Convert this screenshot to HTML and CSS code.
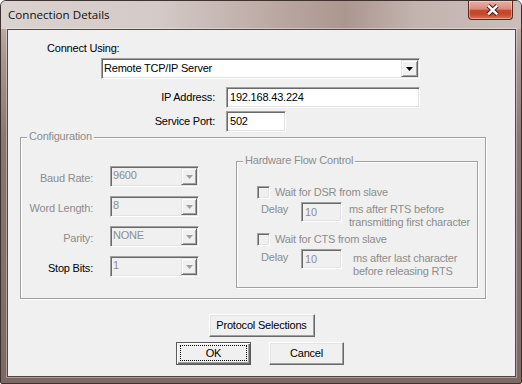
FILE: index.html
```html
<!DOCTYPE html>
<html>
<head>
<meta charset="utf-8">
<link rel="stylesheet" href="styles.css">
</head>
<body>
<div class="window">
  <div class="titlebar">
    <span class="title">Connection Details</span>
    <div class="close">
      <svg width="45" height="18" viewBox="0 0 45 18">
        <path d="M20 4.5 L29.5 13.5 M29.5 4.5 L20 13.5" stroke="#3b1f1b" stroke-width="4.6" fill="none"/>
        <path d="M20 4.5 L29.5 13.5 M29.5 4.5 L20 13.5" stroke="#ffffff" stroke-width="2.6" fill="none"/>
      </svg>
    </div>
  </div>
  <div class="frame">
    <div class="client">
      <div class="connect-label">Connect Using:</div>
      <div class="combo combo-main">
        <span class="combo-text">Remote TCP/IP Server</span>
        <span class="drop"><svg width="7" height="4" viewBox="0 0 7 4"><polygon points="0,0 7,0 3.5,4" fill="#000"/></svg></span>
      </div>
      <div class="field-row ip-row">
        <span class="flabel">IP Address:</span>
        <div class="edit ip">192.168.43.224</div>
      </div>
      <div class="field-row port-row">
        <span class="flabel">Service Port:</span>
        <div class="edit port">502</div>
      </div>

      <div class="group config">
        <span class="glabel">Configuration</span>
        <div class="config-cols">
          <div class="serial">
            <div class="srow">
              <span class="slabel dis">Baud Rate:</span>
              <div class="combo combo-dis"><span class="combo-text">9600</span><span class="drop drop-dis"><svg width="7" height="4" viewBox="0 0 7 4"><polygon points="0,0 7,0 3.5,4" fill="#a0a0a0"/></svg></span></div>
            </div>
            <div class="srow">
              <span class="slabel dis">Word Length:</span>
              <div class="combo combo-dis"><span class="combo-text">8</span><span class="drop drop-dis"><svg width="7" height="4" viewBox="0 0 7 4"><polygon points="0,0 7,0 3.5,4" fill="#a0a0a0"/></svg></span></div>
            </div>
            <div class="srow">
              <span class="slabel dis">Parity:</span>
              <div class="combo combo-dis"><span class="combo-text">NONE</span><span class="drop drop-dis"><svg width="7" height="4" viewBox="0 0 7 4"><polygon points="0,0 7,0 3.5,4" fill="#a0a0a0"/></svg></span></div>
            </div>
            <div class="srow">
              <span class="slabel">Stop Bits:</span>
              <div class="combo combo-dis"><span class="combo-text">1</span><span class="drop drop-dis"><svg width="7" height="4" viewBox="0 0 7 4"><polygon points="0,0 7,0 3.5,4" fill="#a0a0a0"/></svg></span></div>
            </div>
          </div>

          <div class="group hfc">
            <span class="glabel">Hardware Flow Control</span>
            <div class="chk-row">
              <span class="chk"></span>
              <span class="dis chk-text">Wait for DSR from slave</span>
            </div>
            <div class="delay-row">
              <span class="dlabel dis">Delay</span>
              <div class="edit edit-dis">10</div>
              <span class="ms dis">ms after RTS before<br>transmitting first character</span>
            </div>
            <div class="chk-row chk-row2">
              <span class="chk"></span>
              <span class="dis chk-text">Wait for CTS from slave</span>
            </div>
            <div class="delay-row delay-row2">
              <span class="dlabel dis">Delay</span>
              <div class="edit edit-dis">10</div>
              <span class="ms dis">ms after last character<br>before releasing RTS</span>
            </div>
          </div>
        </div>
      </div>

      <div class="btn-row">
        <button class="btn proto">Protocol Selections</button>
      </div>
      <div class="btn-row pair">
        <button class="btn ok"><span class="focus">OK</span></button>
        <button class="btn cancel">Cancel</button>
      </div>
    </div>
  </div>
</div>
</body>
</html>
```
FILE: styles.css
```css
* { box-sizing: border-box; }
html, body { margin: 0; padding: 0; }
body {
  width: 522px;
  height: 384px;
  overflow: hidden;
  background: #ffffff;
  font-family: "Liberation Sans", Arial, sans-serif;
  font-size: 11px;
  line-height: 13px;
  letter-spacing: -0.2px;
  color: #000;
}

.window {
  width: 522px;
  height: 384px;
  border: 1px solid #3d3230;
  border-radius: 6px 6px 2px 2px;
  overflow: hidden;
  display: flex;
  flex-direction: column;
  background: linear-gradient(180deg, #cbbdb9 0px, #a8938e 60px, #8a7570 140px, #7d6964 100%);
}

.titlebar {
  height: 28px;
  flex: none;
  display: flex;
  align-items: flex-start;
  background: linear-gradient(90deg, #dbd3d0 0%, #d4cac7 30%, #bca9a4 52%, #ac9690 66%, #c3b4b0 80%, #cbbdb9 100%);
}
.title {
  font-family: "Open Sans", "Noto Sans", sans-serif;
  font-size: 11.6px;
  letter-spacing: 0;
  line-height: 16px;
  padding: 6px 0 0 7px;
  color: #101010;
}
.close {
  margin-left: auto;
  margin-right: 8px;
  width: 45px;
  height: 19px;
  border: 1px solid #5e2820;
  border-top: none;
  border-radius: 0 0 4px 4px;
  background: linear-gradient(180deg, #e7b0a3 0%, #db8b79 45%, #c54a31 52%, #c6452b 72%, #dc7355 100%);
  box-shadow: inset 0 0 0 1px rgba(255, 255, 255, 0.35);
  display: flex;
}
.close svg { display: block; }

.frame {
  flex: 1;
  display: flex;
  padding: 0 5px 6px 6px;
}
.client {
  flex: 1;
  background: #f0f0f0;
  border: 1px solid #544643;
  box-shadow: 0 0 0 1px rgba(255, 255, 255, 0.35);
  display: flex;
  flex-direction: column;
  align-items: flex-start;
}

.connect-label {
  margin: 12px 0 0 39px;
}

/* sunken controls */
.combo, .edit, .chk {
  border: 1px solid;
  border-color: #a0a0a0 #ffffff #ffffff #a0a0a0;
  box-shadow: inset 1px 1px 0 #696969, inset -1px -1px 0 #e3e3e3;
}
.combo {
  display: flex;
  align-items: center;
  height: 21px;
  padding: 1px;
  background: #fff;
  flex: none;
}
.combo-text { flex: 1; padding-left: 1px; white-space: nowrap; }
.drop {
  align-self: stretch;
  width: 17px;
  flex: none;
  background: #f0f0f0;
  border: 1px solid;
  border-color: #e3e3e3 #696969 #696969 #e3e3e3;
  box-shadow: inset 1px 1px 0 #fff, inset -1px -1px 0 #a0a0a0;
  display: flex;
  align-items: center;
  justify-content: center;
}
.drop svg { display: block; }
.combo-main {
  margin: 3px 0 0 93px;
  width: 319px;
}

.field-row {
  display: flex;
  align-items: center;
}
.ip-row { margin-top: 8px; }
.port-row { margin-top: 3px; }
.flabel {
  width: 207px;
  flex: none;
  text-align: right;
  margin-right: 11px;
}
.edit {
  height: 21px;
  flex: none;
  background: #fff;
  padding: 0 0 0 3px;
  display: flex;
  align-items: center;
  white-space: nowrap;
}
.ip { width: 194px; }
.port { width: 60px; }

.dis { color: #8d8d8d; }

/* group boxes */
.group {
  position: relative;
  flex: none;
  border: 1px solid #a0a0a0;
  box-shadow: inset 1px 1px 0 #fff, 1px 1px 0 #fff;
}
.glabel {
  position: absolute;
  top: -8px;
  left: 6px;
  padding: 0 2px;
  background: #f0f0f0;
  color: #8d8d8d;
  white-space: nowrap;
}
.config {
  margin: 5px 0 0 12px;
  width: 466px;
  height: 162px;
}
.config-cols {
  display: flex;
  align-items: flex-start;
}
.serial {
  padding-top: 28px;
  display: flex;
  flex-direction: column;
  gap: 9px;
}
.srow {
  display: flex;
  align-items: center;
  height: 21px;
}
.slabel {
  width: 72px;
  text-align: right;
  margin-right: 17px;
  padding-top: 3px;
  white-space: nowrap;
}
.combo-dis {
  width: 89px;
  background: #f0f0f0;
  color: #8d8d8d;
}
.combo-dis .combo-text { padding-bottom: 2px; }
.drop-dis { width: 16px; }

.hfc {
  margin: 23px 0 0 37px;
  width: 242px;
  height: 127px;
  padding-left: 20px;
}
.chk-row {
  display: flex;
  align-items: center;
  height: 13px;
  margin-top: 24px;
}
.chk-row2 { margin-top: 4px; }
.chk {
  width: 13px;
  height: 13px;
  background: #f0f0f0;
}
.chk-text { margin-left: 5px; white-space: nowrap; }

.delay-row {
  display: flex;
  align-items: flex-start;
  margin-top: 3px;
}
.dlabel {
  width: 40px;
  margin: 1px 0 0 4px;
}
.edit-dis {
  width: 41px;
  height: 20px;
  background: #f0f0f0;
  color: #8d8d8d;
}
.ms {
  margin: 1px 0 0 7px;
  white-space: nowrap;
}
.delay-row2 .dlabel { margin-top: 2px; }
.delay-row2 .ms { margin: 3px 0 0 11px; }

/* buttons */
.btn-row {
  align-self: stretch;
  display: flex;
  justify-content: center;
  gap: 18px;
}
.btn-row:not(.pair) { margin-top: 15px; }
.pair { margin-top: 5px; padding-right: 3px; }
.btn {
  font: inherit;
  letter-spacing: inherit;
  color: #000;
  height: 23px;
  width: 75px;
  padding: 0;
  margin: 0;
  background: #f0f0f0;
  border: 1px solid;
  border-color: #ffffff #696969 #696969 #ffffff;
  box-shadow: inset -1px -1px 0 #a0a0a0, inset 1px 1px 0 #e3e3e3;
  border-radius: 0;
}
.proto { width: 106px; }
.ok {
  border: 1px solid #5a5a5a;
  box-shadow: inset 1px 1px 0 #fff, inset -1px -1px 0 #696969, inset -2px -2px 0 #a0a0a0;
  padding: 2px 3px 3px 3px;
  display: flex;
}
.focus {
  flex: 1;
  border: 1px dotted #000;
  display: flex;
  align-items: center;
  justify-content: center;
}
```
